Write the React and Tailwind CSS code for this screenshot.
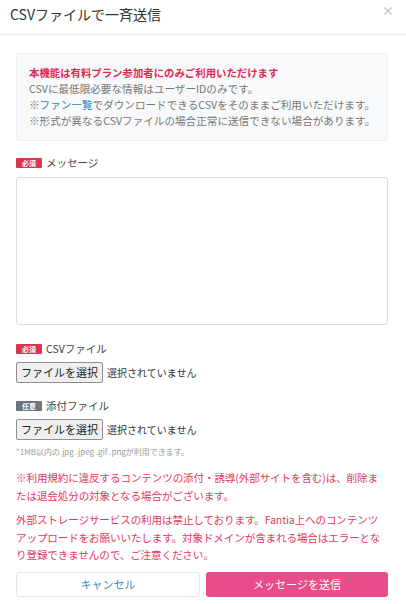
import React from 'react';

const font = { fontFamily: '"Noto Sans CJK JP", "Liberation Sans", sans-serif' };

const Badge = ({ kind }) => (
  <span
    className={`inline-flex items-center justify-center w-[26px] h-[10px] text-[7px] font-bold leading-none text-white rounded-[1px] ${
      kind === 'req' ? 'bg-[#dc3550]' : 'bg-[#6c757d]'
    }`}
  >
    {kind === 'req' ? '必須' : '任意'}
  </span>
);

const FilePicker = () => (
  <div className="flex items-center gap-[4px]">
    <div className="h-[21px] px-[4px] flex items-center bg-[#efefef] border border-[#8f8f8f] rounded-[2px] text-[11px] text-[#222]">
      ファイルを選択
    </div>
    <span className="text-[10px] text-[#333]">選択されていません</span>
  </div>
);

export default function App() {
  return (
    <div className="w-[406px] h-[604px] bg-white overflow-hidden" style={font}>
      {/* Header */}
      <div className="h-[35px] border-b border-[#e9ecef] flex items-start justify-between pl-[10px] pr-[12px] pt-[4px]">
        <h1 className="text-[14px] leading-[20px] text-[#333]">CSVファイルで一斉送信</h1>
        <span className="text-[12px] leading-[14px] text-[#c4c4c4] font-bold">×</span>
      </div>

      <div className="pl-[16px] pr-[18px]">
        {/* Notice */}
        <div className="mt-[18px] h-[88px] bg-[#f8f9fa] border border-[#eceef0] rounded-[3px] pl-[12px] pt-[11px] text-[10.6px] leading-[16px] text-[#777]">
          <p className="font-bold text-[10.4px] text-[#e02a50]">本機能は有料プラン参加者にのみご利用いただけます</p>
          <p>CSVに最低限必要な情報はユーザーIDのみです。</p>
          <p>
            ※<span className="text-[#2a7fc1]">ファン一覧</span>でダウンロードできるCSVをそのままご利用いただけます。
          </p>
          <p>※形式が異なるCSVファイルの場合正常に送信できない場合があります。</p>
        </div>

        {/* Message */}
        <div className="mt-[14px] flex items-center gap-[4px] h-[16px]">
          <Badge kind="req" />
          <span className="text-[10.5px] text-[#444]">メッセージ</span>
        </div>
        <div className="mt-[6px] h-[148px] border border-[#dcdcdc] rounded-[3px]" />

        {/* CSV */}
        <div className="mt-[16px] flex items-center gap-[4px] h-[16px]">
          <Badge kind="req" />
          <span className="text-[10.5px] text-[#444]">CSVファイル</span>
        </div>
        <div className="mt-[5px]">
          <FilePicker />
        </div>

        {/* Attachment */}
        <div className="mt-[15px] flex items-center gap-[4px] h-[16px]">
          <Badge kind="opt" />
          <span className="text-[10.5px] text-[#444]">添付ファイル</span>
        </div>
        <div className="mt-[5px]">
          <FilePicker />
        </div>
        <p className="mt-[6px] text-[8px] leading-[12px] text-[#999]">*1MB以内の.jpg .jpeg .gif .pngが利用できます。</p>

        {/* Warnings */}
        <p className="mt-[11px] text-[10.6px] tracking-[-0.15px] leading-[18px] text-[#e5385f]">
          ※利用規約に違反するコンテンツの添付・誘導(外部サイトを含む)は、削除ま
          <br />
          たは退会処分の対象となる場合がございます。
        </p>
        <p className="mt-[6px] text-[10.6px] tracking-[-0.15px] leading-[17.5px] text-[#e5385f]">
          外部ストレージサービスの利用は禁止しております。Fantia上へのコンテンツ
          <br />
          アップロードをお願いいたします。対象ドメインが含まれる場合はエラーとな
          <br />
          り登録できませんので、ご注意ください。
        </p>

        {/* Actions */}
        <div className="mt-[8px] flex gap-[6px]">
          <button className="flex-1 h-[25px] border border-[#e8e8e8] rounded-[3px] bg-white text-[11px] text-[#3a8fc8]">
            キャンセル
          </button>
          <button className="flex-1 h-[25px] rounded-[3px] bg-[#ea4c89] text-[11px] text-white">
            メッセージを送信
          </button>
        </div>
      </div>
    </div>
  );
}
